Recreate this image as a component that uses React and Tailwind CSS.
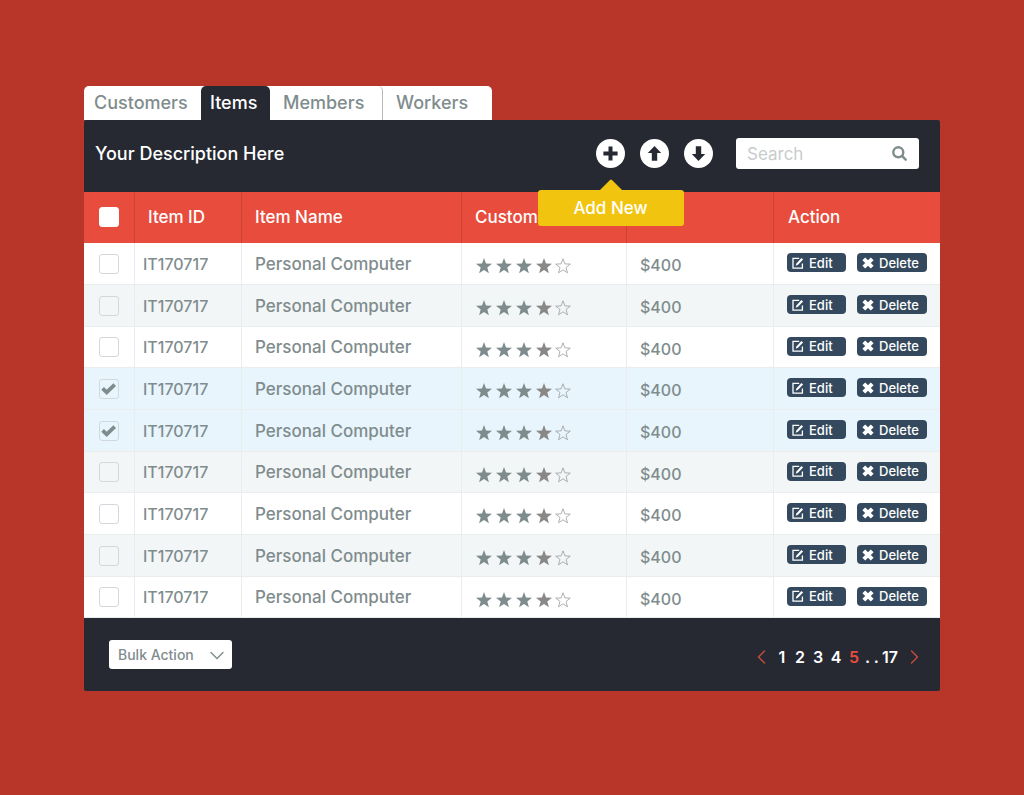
/**
 * App.jsx
 * Items admin table with tabs, toolbar, row selection and pagination.
 */

import React, { useState } from 'react'

const IconPlus = () => (
  <svg width="15" height="15" viewBox="0 0 15 15" fill="currentColor" aria-hidden>
    <path d="M5.5 0.4h4v5.1h5.1v4H9.5v5.1h-4V9.5H0.4v-4h5.1z" />
  </svg>
)

const IconUp = () => (
  <svg width="15" height="15" viewBox="0 0 15 15" fill="currentColor" aria-hidden>
    <path d="M7.5 0.1L14.2 7H10.2v7.7H4.8V7H0.8z" />
  </svg>
)

const IconDown = () => (
  <svg width="15" height="15" viewBox="0 0 15 15" fill="currentColor" aria-hidden>
    <path d="M7.5 14.9L0.8 8H4.8V0.3h5.4V8h4z" />
  </svg>
)

const IconSearch = () => (
  <svg className="absolute right-3 top-2" width="15" height="15" viewBox="0 0 15 15" fill="none" stroke="#7f8c8d" strokeWidth="2.4" strokeLinecap="round" aria-hidden>
    <circle cx="6.3" cy="6.3" r="5" />
    <path d="M10.2 10.2l3.5 3.5" />
  </svg>
)

const IconEdit = () => (
  <svg width="12" height="12" viewBox="0 0 12 12" fill="none" stroke="currentColor" strokeWidth="1.3" aria-hidden>
    <path d="M7.2 1.3H1v9.9h9.4V6.4" />
    <path d="M4.4 6.4L9.4 0.9l1.7 1.5L6 7.8l-2.3 0.9z" fill="currentColor" stroke="none" />
  </svg>
)

const IconDelete = () => (
  <svg width="12" height="12" viewBox="0 0 12 12" fill="none" stroke="currentColor" strokeWidth="4" aria-hidden>
    <path d="M1.8 1.8l8.4 8.4M10.2 1.8l-8.4 8.4" />
  </svg>
)

const IconCheck = () => (
  <svg className="pointer-events-none absolute inset-0 hidden peer-checked:block" width="20" height="20" viewBox="0 0 20 20" fill="none" stroke="#7f8c8d" strokeWidth="3.8" aria-hidden>
    <path d="M3.6 9.4l4.1 4 8-7.8" />
  </svg>
)

const starPath = 'M8 0l2 5.6 6 0.2-4.7 3.7 1.6 5.8L8 12l-4.9 3.3 1.6-5.8L0 5.8l6-0.2z'
const outlinePath = 'M8 0.8l1.9 5.1 5.4 0.2-4.3 3.4 1.5 5.3L8 11.8l-4.5 3 1.5-5.3L0.7 6.1l5.4-0.2z'
const starColors = ['#7f8c8d', '#7f8c8d', '#7f8c8d', '#8a8787']

const Stars = () => (
  <div className="flex items-center gap-1 pt-[5px] pl-px" role="img" aria-label="4 of 5 stars">
    {starColors.map((color, i) => (
      <svg key={i} width="16" height="16" viewBox="0 0 16 16" fill={color}>
        <path d={starPath} />
      </svg>
    ))}
    <svg className="-ml-px" width="16" height="16" viewBox="0 0 16 16" fill="none" stroke="#9a9d9e" strokeWidth="0.8">
      <path d={outlinePath} />
    </svg>
  </div>
)

const Chevron = ({ d, className }) => (
  <svg className={className} width="14" height="14" viewBox="0 0 14 14" fill="none" stroke="currentColor" strokeWidth="1.4" strokeLinecap="round" aria-hidden>
    <path d={d} />
  </svg>
)

const tabs = [
  { name: 'Customers', className: 'w-[117px] pl-[10px] text-[#7f8c8d]' },
  { name: 'Items', className: 'w-[69px] pl-[9px] rounded-t-[5px] bg-[#262932] text-white' },
  { name: 'Members', className: 'w-[113px] pl-[13px] rounded-tr-[5px] border-r border-[#b4b9ba] text-[#7f8c8d]' },
  { name: 'Workers', className: 'w-[109px] pl-[13px] text-[#7f8c8d]' },
]

const items = Array.from({ length: 9 }, (_, i) => ({
  key: i,
  id: 'IT170717',
  name: 'Personal Computer',
  price: '$400',
}))

const roundButton = 'w-[29px] h-[29px] rounded-full bg-white text-[#262932] flex items-center justify-center'
const actionButton = 'h-[19px] rounded-[4px] bg-[#34495e] text-white text-[13px] font-medium flex items-center gap-[5px] pl-[5px]'
const headCell = 'border-r border-[#cb4335] text-left font-medium pl-[13px] pb-[2px]'
const bodyCell = 'border-r border-b border-[#e9eded]'

const Checkbox = ({ label, className, ...props }) => (
  <span className="relative mx-auto block w-5 h-5">
    <input type="checkbox" aria-label={label} className={`peer block appearance-none w-5 h-5 rounded-[3px] border ${className}`} {...props} />
    <IconCheck />
  </span>
)

const App = () => {
  const [selected, setSelected] = useState([3, 4])

  const toggle = (key) => {
    setSelected(selected.includes(key) ? selected.filter((k) => k !== key) : [...selected, key])
  }

  return (
    <main className="min-h-screen bg-[#b83629] px-[84px] py-[86px] font-['Inter',sans-serif] text-[17px] leading-5">
      <nav className="flex w-fit h-[34px] rounded-t-[5px] bg-white">
        {tabs.map((tab) => (
          <button key={tab.name} type="button" className={`text-left text-[18px] font-medium ${tab.className}`}>
            {tab.name}
          </button>
        ))}
      </nav>

      <header className="h-[72px] rounded-t-[2px] bg-[#262932] pl-[11px] pr-[21px] pb-[5px] flex items-center justify-between">
        <h1 className="text-[18px] font-medium text-white">Your Description Here</h1>
        <div className="flex items-center">
          <div className="flex items-center gap-[15px] mr-[23px]">
            <div className="relative">
              <button type="button" aria-label="Add" className={roundButton}><IconPlus /></button>
              <div role="tooltip" className="absolute z-10 top-full left-1/2 -translate-x-1/2 mt-[11px] flex flex-col items-center">
                <svg width="22" height="11" viewBox="0 0 22 11" fill="#f1c40f" aria-hidden>
                  <path d="M0 11L10 1q1-1 2 0l10 10z" />
                </svg>
                <div className="w-[146px] h-9 rounded-[3px] bg-[#f1c40f] text-white font-medium flex items-center justify-center">
                  Add New
                </div>
              </div>
            </div>
            <button type="button" aria-label="Move up" className={roundButton}><IconUp /></button>
            <button type="button" aria-label="Move down" className={roundButton}><IconDown /></button>
          </div>
          <div className="relative">
            <input
              type="text"
              aria-label="Search"
              placeholder="Search"
              className="block w-[183px] h-[31px] rounded-[3px] bg-white pl-[11px] pr-9 text-[#7f8c8d] placeholder:text-[#c8cccd]"
            />
            <IconSearch />
          </div>
        </div>
      </header>

      <table className="w-full table-fixed border-separate border-spacing-0 bg-white text-[#7f8c8d]">
        <colgroup>
          <col className="w-[51px]" />
          <col className="w-[107px]" />
          <col />
          <col className="w-[165px]" />
          <col className="w-[147px]" />
          <col className="w-[166px]" />
        </colgroup>
        <thead>
          <tr className="h-[51px] bg-[#e74c3c] text-white">
            <th className="border-r border-[#cb4335] p-0 pb-[2px]">
              <Checkbox label="Select all" className="border-white bg-white" />
            </th>
            <th className={headCell}>Item ID</th>
            <th className={headCell}>Item Name</th>
            <th className={headCell}>Customer</th>
            <th className={headCell} aria-label="Price" />
            <th className="text-left font-medium pl-[14px] pb-[2px]">Action</th>
          </tr>
        </thead>
        <tbody className="font-medium">
          {items.map((item) => (
            <tr
              key={item.key}
              className={`h-[42px] nth-[3n]:h-[41px] ${selected.includes(item.key) ? 'bg-[#e8f5fd]' : 'even:bg-[#f3f6f7]'}`}
            >
              <td className={bodyCell}>
                <Checkbox
                  label={`Select row ${item.key + 1}`}
                  className="border-[#d3d8dc]"
                  checked={selected.includes(item.key)}
                  onChange={() => toggle(item.key)}
                />
              </td>
              <td className={`pl-2 text-[16px] ${bodyCell}`}>{item.id}</td>
              <td className={`pl-[13px] ${bodyCell}`}>{item.name}</td>
              <td className={`pl-[13px] ${bodyCell}`}><Stars /></td>
              <td className={`pl-[13px] pt-[3px] text-[16px] ${bodyCell}`}>{item.price}</td>
              <td className="border-b border-[#e9eded] pl-[13px]">
                <div className="flex gap-[11px] pb-[2px]">
                  <button type="button" className={`w-[59px] ${actionButton}`}><IconEdit />Edit</button>
                  <button type="button" className={`w-[70px] ${actionButton}`}><IconDelete />Delete</button>
                </div>
              </td>
            </tr>
          ))}
        </tbody>
      </table>

      <footer className="h-[73px] rounded-b-[2px] bg-[#262932] pl-[25px] pr-[19px] flex items-center justify-between">
        <div className="relative text-[#7f8c8d]">
          <select aria-label="Bulk Action" className="block appearance-none w-[123px] h-[29px] rounded-[3px] bg-white pl-[9px] text-[14px] font-medium">
            <option>Bulk Action</option>
          </select>
          <Chevron className="pointer-events-none absolute right-2 top-2" d="M1 4.5l6 6 6-6" />
        </div>
        <nav className="flex items-center pt-1 text-[16px] font-semibold text-white" aria-label="Pagination">
          <a href="#prev" aria-label="Previous page" className="mr-1 text-[#c94a3d]"><Chevron d="M9.5 1l-6 6 6 6" /></a>
          <a href="#1" className="w-[18px] text-center">1</a>
          <a href="#2" className="w-[18px] text-center">2</a>
          <a href="#3" className="w-[18px] text-center">3</a>
          <a href="#4" className="w-[18px] text-center">4</a>
          <a href="#5" className="w-[18px] text-center text-[#e74c3c]">5</a>
          <span className="w-[18px] text-center">. .</span>
          <a href="#17" className="w-[18px] text-center">17</a>
          <a href="#next" aria-label="Next page" className="ml-2 text-[#c94a3d]"><Chevron d="M4.5 1l6 6-6 6" /></a>
        </nav>
      </footer>
    </main>
  )
}

export default App
